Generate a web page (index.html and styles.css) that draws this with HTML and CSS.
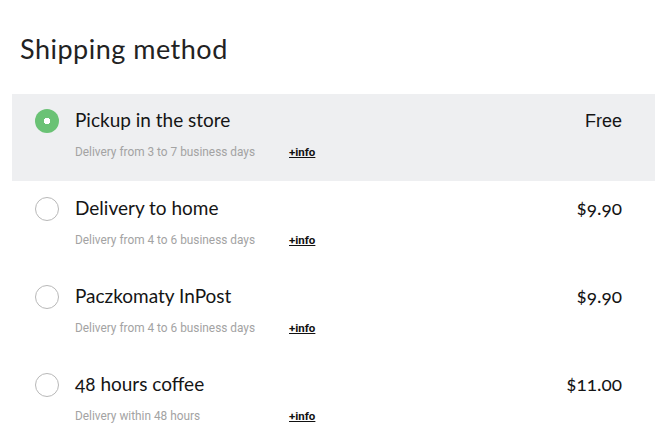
FILE: index.html
```html
<!DOCTYPE html>
<html>
<head>
<meta charset="utf-8">
<link rel="stylesheet" href="styles.css">
</head>
<body>
<h1 class="heading">Shipping method</h1>
<div class="options">
  <div class="option selected">
    <span class="radio checked"></span>
    <div class="body">
      <div class="line">
        <span class="title">Pickup in the store</span>
        <span class="price free">Free</span>
      </div>
      <div class="sub">
        <span class="desc">Delivery from 3 to 7 business days</span>
        <a class="info">+info</a>
      </div>
    </div>
  </div>
  <div class="option">
    <span class="radio"></span>
    <div class="body">
      <div class="line">
        <span class="title">Delivery to home</span>
        <span class="price">$9.90</span>
      </div>
      <div class="sub">
        <span class="desc">Delivery from 4 to 6 business days</span>
        <a class="info">+info</a>
      </div>
    </div>
  </div>
  <div class="option">
    <span class="radio"></span>
    <div class="body">
      <div class="line">
        <span class="title">Paczkomaty InPost</span>
        <span class="price">$9.90</span>
      </div>
      <div class="sub">
        <span class="desc">Delivery from 4 to 6 business days</span>
        <a class="info">+info</a>
      </div>
    </div>
  </div>
  <div class="option">
    <span class="radio"></span>
    <div class="body">
      <div class="line">
        <span class="title">48 hours coffee</span>
        <span class="price">$11.00</span>
      </div>
      <div class="sub">
        <span class="desc">Delivery within 48 hours</span>
        <a class="info">+info</a>
      </div>
    </div>
  </div>
</div>
</body>
</html>
```
FILE: styles.css
```css
html, body {
  margin: 0;
  padding: 0;
  background: #fff;
}
body {
  font-family: Lato, "Noto Sans", sans-serif;
  color: #1a1a1a;
}
.heading {
  margin: 0;
  padding: 33px 0 0 20px;
  height: 94px;
  box-sizing: border-box;
  font-size: 27px;
  letter-spacing: 0.5px;
  font-weight: 400;
  line-height: 32px;
  color: #222;
}
.options {
  margin: 0 13px 0 12px;
}
.option {
  display: flex;
  height: 88px;
  padding: 15px 33px 0 23px;
  box-sizing: border-box;
}
.option.selected {
  background: #eeeff1;
  height: 87px;
  margin-bottom: 1px;
}
.radio {
  flex: none;
  width: 24px;
  height: 24px;
  box-sizing: border-box;
  border: 1px solid #b8b8b8;
  border-radius: 50%;
  background: #fff;
  margin-right: 16px;
}
.radio.checked {
  border: none;
  background: radial-gradient(circle, #fff 0 3px, #6ac275 3.5px);
}
.body {
  flex: 1;
}
.line {
  display: flex;
  justify-content: space-between;
  align-items: center;
  height: 24px;
}
.title {
  font-size: 19px;
  line-height: 20px;
  margin-top: -3px;
  color: #151515;
  font-variant-numeric: oldstyle-nums;
}
.price {
  font-size: 19px;
  line-height: 20px;
  margin-top: -3px;
  color: #151515;
  font-variant-numeric: oldstyle-nums;
}
.price.free {
  font-family: "Liberation Sans", Arial, sans-serif;
  font-size: 18px;
  margin-top: -1px;
}
.sub {
  display: flex;
  align-items: center;
  margin-top: 12px;
  height: 14px;
}
.desc {
  width: 214px;
  font-family: Roboto, sans-serif;
  font-size: 11.85px;
  color: #a3a3a3;
}
.info {
  font-family: Roboto, sans-serif;
  font-size: 11.5px;
  font-weight: 700;
  color: #111;
  text-decoration: underline;
}
```
